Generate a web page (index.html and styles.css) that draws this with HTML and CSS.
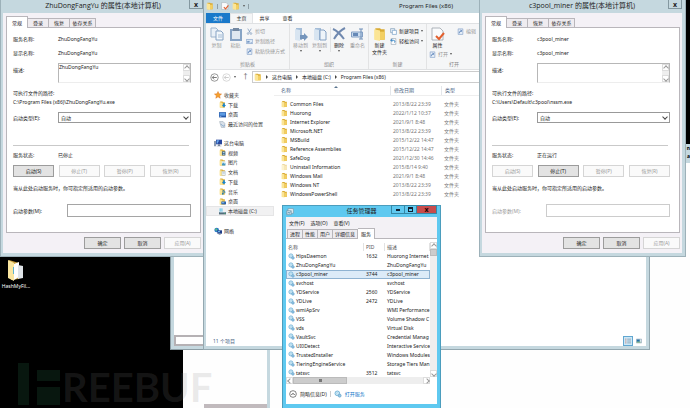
FILE: index.html
```html
<!DOCTYPE html>
<html lang="zh-CN">
<head>
<meta charset="utf-8">
<title>桌面</title>
<link rel="stylesheet" href="styles.css">
</head>
<body>
<svg class="defs" aria-hidden="true">
  <symbol id="folder" viewBox="0 0 12 12"><path fill="#d9ab34" d="M2 1l4 0 1 1h3v9H2z"/><path fill="#fbe596" d="M1 2l5 1v9l-5-1z"/><path fill="#f3cf62" d="M6 4h4v7H6z"/></symbol>
  <symbol id="star" viewBox="0 0 12 12"><path fill="#f5a12b" stroke="#dc6c1a" stroke-width=".7" d="M6 .8l1.5 3.5 3.8.3-2.9 2.5.9 3.7L6 8.8l-3.300 2 .9-3.700L.7 4.600l3.800-.3z"/></symbol>
  <symbol id="pc" viewBox="0 0 12 12"><path fill="#8b9bb2" d="M0 3h3v8H0z"/><path fill="#28479d" d="M3 1h9v7H3z"/><path fill="#6cabed" d="M4 2h4L5 7H4z"/><path fill="#7a879b" d="M6 8h3v2h2v1H4v-1h2z"/></symbol>
  <symbol id="desk" viewBox="0 0 12 12"><path fill="#2458a9" d="M0 2h12v9H0z"/><path fill="#5c9be2" d="M1 3h10v5H1z"/><path fill="#b9d5ef" d="M1 9h3v1H1z"/></symbol>
  <symbol id="recent" viewBox="0 0 12 12"><path fill="#d8e0e8" stroke="#8c9cab" stroke-width=".8" d="M1 1h6l3 3v7H4z"/><path fill="none" stroke="#568cc0" d="M3 5l4 4 3-2"/></symbol>
  <symbol id="down" viewBox="0 0 12 12"><use href="#folder"/><path fill="#1684cf" d="M7 4h3v3h2l-3.500 4L5 7h2z"/></symbol>
  <symbol id="video" viewBox="0 0 12 12"><use href="#folder"/><path fill="#45627d" d="M5 4h6v7H5z"/><path fill="#a8d4e8" d="M6.500 5h3v2h-3zM6.500 8h3v2h-3z"/></symbol>
  <symbol id="image" viewBox="0 0 12 12"><use href="#folder"/><path fill="#d8edf6" d="M5 4h6v7H5z"/><path fill="#4697c1" d="M5 9l2-3 2 2 2-1v4H5z"/></symbol>
  <symbol id="doc" viewBox="0 0 12 12"><use href="#folder"/><path fill="#f8fafc" stroke="#8da2b5" stroke-width=".6" d="M5 4h6v7H5z"/><path stroke="#7b9bb6" stroke-width=".7" d="M6 6h4M6 8h4"/></symbol>
  <symbol id="music" viewBox="0 0 12 12"><use href="#folder"/><path fill="none" stroke="#2078b5" stroke-width="1.500" d="M7 10V4l3 2v3"/><circle cx="6.500" cy="10" r="1.500" fill="#2078b5"/></symbol>
  <symbol id="fdesk" viewBox="0 0 12 12"><use href="#folder"/><path fill="#2b60a9" d="M4 6h8v5H4z"/><path fill="#78b2e8" d="M5 7h4v2H5z"/></symbol>
  <symbol id="disk" viewBox="0 0 12 12"><path fill="#36b4e5" d="M1 1h2v2H1zM4 1h2v2H4zM1 4h2v2H1zM4 4h2v2H4z"/><path fill="#526c7b" d="M0 7h12v4H0z"/><path fill="#a9c6d0" d="M1 7h10v1H1z"/><path fill="#43d266" d="M9 9h2v1H9z"/></symbol>
  <symbol id="net" viewBox="0 0 12 12"><circle cx="4" cy="4.500" r="3.500" fill="#2b77c9"/><path fill="#5dc57d" d="M2 2l3 1-1 3-2-1z"/><path fill="#203e88" d="M5 5h7v5H5z"/><path fill="#64b3ea" d="M6 6h3v2H6z"/><path fill="#71849a" d="M7 10h3v1.500H7z"/></symbol>
  <symbol id="copy" viewBox="0 0 14 14"><path fill="#e9f0f7" stroke="#9cb3cc" d="M1 1h5l2 2v7H1z"/><path fill="#f2f7fb" stroke="#86a3c4" d="M6 4h5l2 2v7H6z"/><path stroke="#a6bdd6" d="M8 8h4M8 10h4"/></symbol>
  <symbol id="paste" viewBox="0 0 14 14"><path fill="#87a4c5" d="M1 2h12v12H1z"/><path fill="#dfe8f1" d="M3 4h8v8H3z"/><path fill="#7388a1" d="M4 1h6v3H4z"/></symbol>
  <symbol id="cut" viewBox="0 0 12 12"><path fill="none" stroke="#7694b9" stroke-width="1.200" d="M3 1l4 7M9 1L5 8"/><circle cx="3.500" cy="9.500" r="1.500" fill="none" stroke="#7694b9"/><circle cx="8.500" cy="9.500" r="1.500" fill="none" stroke="#7694b9"/></symbol>
  <symbol id="path" viewBox="0 0 12 12"><path fill="#dfebf7" stroke="#7696c2" d="M.5 2.500h11v7H.5z"/><path fill="none" stroke="#557eb4" d="M2 5l1 3 1-3 1 3 1-3M8 8h2"/></symbol>
  <symbol id="link" viewBox="0 0 12 12"><path fill="#e7eff8" stroke="#7696c2" d="M2 1.500h8v9.500H2z"/><path fill="none" stroke="#406ead" stroke-width="1.300" d="M4 9c0-3 1-4 4-4M6 3l2 2-2 2"/></symbol>
  <symbol id="move" viewBox="0 0 14 14"><path fill="#a4bdd8" d="M2 1h6v12H2z"/><path fill="#d8e5f1" d="M1 2l5 1v11l-5-1z"/><path fill="#7595bc" d="M6 8h4V6l4 4-4 4v-2H6z"/></symbol>
  <symbol id="copyto" viewBox="0 0 14 14"><path fill="#a4bdd8" d="M2 1h6v12H2z"/><path fill="#d8e5f1" d="M1 2l5 1v11l-5-1z"/><path fill="#eef4fa" stroke="#83a0c4" d="M7 3h4l2 2v8H7z"/></symbol>
  <symbol id="delete" viewBox="0 0 14 14"><path fill="none" stroke="#7089af" stroke-width="2" d="M1 2c5 2 8 6 11 10M13 1C9 3 5 7 2 12"/></symbol>
  <symbol id="rename" viewBox="0 0 14 14"><path fill="#cbdcee" stroke="#829fc4" d="M.5 5h11v5H.5z"/><path fill="#6689b7" d="M2 6h5v3H2z"/><path fill="none" stroke="#6d8eb9" d="M8 2h4M10 2v10M8 12h4"/></symbol>
  <symbol id="check" viewBox="0 0 14 14"><path fill="#fafbfc" stroke="#9aa2aa" stroke-width=".8" d="M1 1h8l3 3v9H1z"/><path fill="none" stroke="#e2602f" stroke-width="2" d="M5 9l3 3 5-6"/></symbol>
  <symbol id="newitem" viewBox="0 0 12 12"><path fill="#e8f1f8" stroke="#7392b2" d="M1 1h7v7H1z"/><path fill="#fff" stroke="#5b8dbd" d="M4 4h7v7H4z"/></symbol>
  <symbol id="easy" viewBox="0 0 12 12"><path fill="#fff" stroke="#8998a8" d="M2 1h8v10H2z"/><path fill="none" stroke="#267bc1" stroke-width="1.500" d="M2 4h4c3 0 3 3 1 4M4 2L1 4l3 2"/></symbol>
  <symbol id="gear" viewBox="0 0 12 12"><circle cx="5" cy="5" r="3.500" fill="#d2edf8" stroke="#6fb0d6" stroke-width="1.400"/><circle cx="5" cy="5" r="1.200" fill="#fff" stroke="#6fb0d6" stroke-width=".6"/><circle cx="8.500" cy="8.500" r="2.200" fill="#9acce8" stroke="#5c9ac4"/></symbol>
  <symbol id="back" viewBox="0 0 12 12"><circle cx="6" cy="6" r="5" fill="#fff" stroke="currentColor"/><path fill="none" stroke="currentColor" stroke-width="1.300" d="M9 6H3M5.500 3.500L3 6l2.500 2.500"/></symbol>
</svg>

<main class="desktop">
  <div class="shortcut">
    <svg viewBox="0 0 18 22"><path fill="#c79e3c" d="M2 1l10 3v16L4 21z"/><path fill="#fbe7a1" d="M1 1l6 3v18l-6-3z"/><path fill="#fff" d="M7 5l5-2v15l-5 3z"/><path fill="#dfe4e8" d="M11 6l5 1v12l-5 1z"/><path fill="#61b4cd" d="M6 8h1v7H6z"/></svg>
    <span>HashMyFil...</span>
  </div>

  <div class="plain side"><div class="side-title"><b>n</b><b>a</b></div></div>
  <div class="plain lower"><div class="lower-scroll"></div></div>
  <div class="plain lower-right"></div>
  <div class="plain framed"><div class="framed-bar"></div></div>

  <section class="dialog first">
    <header><h2>ZhuDongFangYu 的属性(本地计算机)</h2><button class="close" aria-label="关闭">x</button></header>
    <div class="client">
      <nav class="tabs"><button class="on">常规</button><button>登录</button><button>恢复</button><button>依存关系</button></nav>
      <div class="panel">
        <div class="row"><span>服务名称:</span><span>ZhuDongFangYu</span></div>
        <div class="row"><span>显示名称:</span><span>ZhuDongFangYu</span></div>
        <div class="row desc"><label for="d1">描述:</label><div class="memo"><textarea id="d1" readonly>ZhuDongFangYu</textarea><div class="spin"><i class="up"></i><i class="dn"></i></div></div></div>
        <p class="path">可执行文件的路径:<br>C:\Program Files (x86)\ZhuDongFangYu.exe</p>
        <div class="row type"><label for="t1">启动类型(E):</label><div class="pick"><select id="t1"><option>自动</option></select></div></div>
        <hr>
        <div class="row state"><span>服务状态:</span><span>已停止</span></div>
        <div class="actions"><button>启动(S)</button><button disabled>停止(T)</button><button disabled>暂停(P)</button><button disabled>恢复(R)</button></div>
        <p class="hint">当从此处启动服务时，你可指定所适用的启动参数。</p>
        <div class="param"><label for="p1">启动参数(M):</label><input id="p1"></div>
      </div>
      <footer><button>确定</button><button>取消</button><button disabled>应用(A)</button></footer>
    </div>
  </section>

  <section class="explorer">
    <header class="titlebar">
      <div class="quick"><svg><use href="#folder"/></svg><i></i><svg><use href="#check"/></svg><svg><use href="#folder"/></svg><b class="caret"></b><i></i></div>
      <h2>Program Files (x86)</h2>
    </header>
    <nav class="ribbon-tabs"><button class="file">文件</button><button class="on">主页</button><button>共享</button><button>查看</button></nav>
    <div class="ribbon">
      <div class="group clip">
        <div class="tools">
          <button class="big dim"><svg><use href="#copy"/></svg>复制</button>
          <button class="big dim"><svg><use href="#paste"/></svg>粘贴</button>
          <div class="stack dim"><button><svg><use href="#cut"/></svg>剪切</button><button><svg><use href="#path"/></svg>复制路径</button><button><svg><use href="#link"/></svg>粘贴快捷方式</button></div>
        </div><span class="name">剪贴板</span>
      </div>
      <div class="group org">
        <div class="tools">
          <button class="big dim"><svg><use href="#move"/></svg>移动到<b class="caret"></b></button>
          <button class="big dim"><svg><use href="#copyto"/></svg>复制到<b class="caret"></b></button>
          <button class="big split"><svg><use href="#delete"/></svg>删除<b class="caret"></b></button>
          <button class="big dim"><svg><use href="#rename"/></svg>重命名</button>
        </div><span class="name">组织</span>
      </div>
      <div class="group new">
        <div class="tools">
          <button class="big"><svg><use href="#folder"/></svg><span>新建<br>文件夹</span></button>
          <div class="stack"><button><svg><use href="#newitem"/></svg>新建项目<b class="caret"></b></button><button><svg><use href="#easy"/></svg>轻松访问<b class="caret"></b></button></div>
        </div><span class="name">新建</span>
      </div>
      <div class="group open">
        <div class="tools">
          <div class="props"><button class="big"><svg><use href="#check"/></svg>属性</button><button class="mini dim"><svg><use href="#link"/></svg>打开<b class="caret"></b></button></div>
          <div class="stack dim"><button><svg><use href="#link"/></svg>编辑</button></div>
        </div><span class="name">打开</span>
      </div>
    </div>
    <div class="address">
      <button aria-label="后退"><svg><use href="#back"/></svg></button>
      <button class="fwd" aria-label="前进"><svg><use href="#back"/></svg></button>
      <b class="caret"></b><span class="upward">↑</span>
      <div class="crumbs"><svg><use href="#folder"/></svg><i></i><a href="#">这台电脑</a><i></i><a href="#">本地磁盘 (C:)</a><i></i><a href="#">Program Files (x86)</a></div>
    </div>
    <div class="body">
      <nav class="tree">
        <ul class="t1"><li class="root"><svg><use href="#star"/></svg>收藏夹</li><li><svg><use href="#down"/></svg>下载</li><li><svg><use href="#desk"/></svg>桌面</li><li><svg><use href="#recent"/></svg>最近访问的位置</li></ul>
        <ul class="t2"><li class="root"><svg><use href="#pc"/></svg>这台电脑</li><li><svg><use href="#video"/></svg>视频</li><li><svg><use href="#image"/></svg>图片</li><li><svg><use href="#doc"/></svg>文档</li><li><svg><use href="#down"/></svg>下载</li><li><svg><use href="#music"/></svg>音乐</li><li><svg><use href="#fdesk"/></svg>桌面</li><li class="sel"><svg><use href="#disk"/></svg>本地磁盘 (C:)</li></ul>
        <ul class="t3"><li class="root"><svg><use href="#net"/></svg>网络</li></ul>
      </nav>
      <table class="files">
        <thead><tr><th>名称<i></i></th><th>修改日期</th><th>类型</th></tr></thead>
        <tbody>
          <tr><td><svg><use href="#folder"/></svg>Common Files</td><td>2013/8/22 23:39</td><td>文件夹</td></tr>
          <tr><td><svg><use href="#folder"/></svg>Huorong</td><td>2022/1/12 10:37</td><td>文件夹</td></tr>
          <tr><td><svg><use href="#folder"/></svg>Internet Explorer</td><td>2021/9/1 8:48</td><td>文件夹</td></tr>
          <tr><td><svg><use href="#folder"/></svg>Microsoft.NET</td><td>2013/8/22 23:39</td><td>文件夹</td></tr>
          <tr><td><svg><use href="#folder"/></svg>MSBuild</td><td>2015/12/22 14:47</td><td>文件夹</td></tr>
          <tr><td><svg><use href="#folder"/></svg>Reference Assemblies</td><td>2015/12/22 14:47</td><td>文件夹</td></tr>
          <tr><td><svg><use href="#folder"/></svg>SafeDog</td><td>2021/12/30 14:46</td><td>文件夹</td></tr>
          <tr class="hidden-item"><td><svg><use href="#folder"/></svg>Uninstall Information</td><td>2015/8/14 9:40</td><td>文件夹</td></tr>
          <tr><td><svg><use href="#folder"/></svg>Windows Mail</td><td>2021/9/1 8:48</td><td>文件夹</td></tr>
          <tr><td><svg><use href="#folder"/></svg>Windows NT</td><td>2013/8/22 23:39</td><td>文件夹</td></tr>
          <tr><td><svg><use href="#folder"/></svg>WindowsPowerShell</td><td>2013/8/22 23:39</td><td>文件夹</td></tr>
        </tbody>
      </table>
    </div>
    <footer class="status"><span>11 个项目</span><button class="on" aria-label="详细信息"><svg viewBox="0 0 8 8"><path stroke="#8296a8" d="M3 1.500h5M3 4h5M3 6.500h5"/><path stroke="#c77d70" d="M0 1.500h2M0 4h2M0 6.500h2"/></svg></button><button aria-label="大图标"><svg viewBox="0 0 8 8"><path fill="#d8e6ee" stroke="#8ba0b0" stroke-width=".8" d="M.5 1.500h7v5h-7z"/><path fill="#256fa5" d="M1 2h4v3H1z"/><path fill="#5ca45c" d="M1 5h5v1H1z"/></svg></button></footer>
  </section>

  <section class="dialog second">
    <header><h2>c3pool_miner 的属性(本地计算机)</h2><button class="close" aria-label="关闭">x</button></header>
    <div class="client">
      <nav class="tabs"><button class="on">常规</button><button>登录</button><button>恢复</button><button>依存关系</button></nav>
      <div class="panel">
        <div class="row"><span>服务名称:</span><span>c3pool_miner</span></div>
        <div class="row"><span>显示名称:</span><span>c3pool_miner</span></div>
        <div class="row desc"><label for="d2">描述:</label><div class="memo"><textarea id="d2" readonly></textarea><div class="spin"><i class="up"></i><i class="dn"></i></div></div></div>
        <p class="path">可执行文件的路径:<br>C:\Users\Default\c3pool\nssm.exe</p>
        <div class="row type"><label for="t2">启动类型(E):</label><div class="pick"><select id="t2"><option>自动</option></select></div></div>
        <hr>
        <div class="row state"><span>服务状态:</span><span>正在运行</span></div>
        <div class="actions"><button disabled>启动(S)</button><button>停止(T)</button><button disabled>暂停(P)</button><button disabled>恢复(R)</button></div>
        <p class="hint">当从此处启动服务时，你可指定所适用的启动参数。</p>
        <div class="param off"><label for="p2">启动参数(M):</label><input id="p2" disabled></div>
      </div>
      <footer><button>确定</button><button>取消</button><button disabled>应用(A)</button></footer>
    </div>
  </section>

  <section class="taskmgr">
    <header>
      <svg class="appicon" viewBox="0 0 12 12"><path fill="#e8f4fa" stroke="#7694a5" d="M3 1h8v7H3z"/><path fill="#c8dde8" stroke="#7694a5" d="M1 4h7v6H1z"/><path fill="none" stroke="#4b8aa9" d="M2 8l2-2 1 2 2-3"/></svg>
      <h2>任务管理器</h2>
      <div class="controls"><button aria-label="最小化"><i class="min"></i></button><button aria-label="最大化"><i class="max"></i></button><button class="red" aria-label="关闭">x</button></div>
    </header>
    <div class="inner">
      <nav class="menu"><button>文件(F)</button><button>选项(O)</button><button>查看(V)</button></nav>
      <nav class="tm-tabs"><button>进程</button><button>性能</button><button>用户</button><button>详细信息</button><button class="on">服务</button></nav>
      <div class="tm-page">
        <div class="listbox">
          <table>
            <thead><tr><th>名称</th><th>PID</th><th>描述</th></tr></thead>
            <tbody>
              <tr><td><svg><use href="#gear"/></svg>HipsDaemon</td><td>1632</td><td>Huorong Internet</td></tr>
              <tr><td><svg><use href="#gear"/></svg>ZhuDongFangYu</td><td></td><td>ZhuDongFangYu</td></tr>
              <tr class="sel"><td><svg><use href="#gear"/></svg>c3pool_miner</td><td>3744</td><td>c3pool_miner</td></tr>
              <tr><td><svg><use href="#gear"/></svg>svchost</td><td></td><td>svchost</td></tr>
              <tr><td><svg><use href="#gear"/></svg>YDService</td><td>2560</td><td>YDService</td></tr>
              <tr><td><svg><use href="#gear"/></svg>YDLive</td><td>2472</td><td>YDLive</td></tr>
              <tr><td><svg><use href="#gear"/></svg>wmiApSrv</td><td></td><td>WMI Performance</td></tr>
              <tr><td><svg><use href="#gear"/></svg>VSS</td><td></td><td>Volume Shadow C</td></tr>
              <tr><td><svg><use href="#gear"/></svg>vds</td><td></td><td>Virtual Disk</td></tr>
              <tr><td><svg><use href="#gear"/></svg>VaultSvc</td><td></td><td>Credential Manag</td></tr>
              <tr><td><svg><use href="#gear"/></svg>UI0Detect</td><td></td><td>Interactive Service</td></tr>
              <tr><td><svg><use href="#gear"/></svg>TrustedInstaller</td><td></td><td>Windows Modules</td></tr>
              <tr><td><svg><use href="#gear"/></svg>TieringEngineService</td><td></td><td>Storage Tiers Man</td></tr>
              <tr><td><svg><use href="#gear"/></svg>tatsvc</td><td>3512</td><td>tatsvc</td></tr>
            </tbody>
          </table>
          <div class="vbar"><i class="up"></i><b></b><i class="dn"></i></div>
        </div>
        <div class="hbar"><i class="lf"></i><b></b><i class="rt"></i></div>
        <footer><svg viewBox="0 0 12 12"><circle cx="6" cy="6" r="5" fill="#fff" stroke="#444"/><path fill="none" stroke="#333" stroke-width="1.300" d="M3.500 7.500L6 5l2.500 2.500"/></svg><button>简略信息(D)</button><i></i><svg><use href="#gear"/></svg><a href="#">打开服务</a></footer>
      </div>
    </div>
  </section>

  <div class="brand"><svg viewBox="0 0 42 42"><path d="M0 0h11v42H0zM19 7h23v11H19zM19 24h23v18H19z"/></svg><span>REEBUF</span></div>
</main>
</body>
</html>
```
FILE: styles.css
```css
* { box-sizing: border-box; }
body, h2, p, ul { margin: 0; padding: 0; }
body {
  background: #fff;
  color: #222;
  font: 5px/8px "Noto Sans", "Noto Sans CJK SC", sans-serif;
  overflow: hidden;
}
button, input, select, textarea { font: inherit; color: inherit; margin: 0; padding: 0; border: 0; background: none; border-radius: 0; white-space: nowrap; }
a { color: inherit; text-decoration: none; }
svg { display: block; flex: none; width: 8px; height: 8px; }
.defs { position: absolute; width: 0; height: 0; }
h2 { font: 400 7px/12px "Open Sans", "Noto Sans CJK SC", sans-serif; white-space: nowrap; }
ul { list-style: none; }

.desktop { position: relative; height: calc(100vh - 4px); background: #000; overflow: hidden; }
.shortcut { position: absolute; left: 0; top: 259px; width: 32px; color: #fff; display: flex; flex-direction: column; align-items: center; gap: 1px; }
.shortcut svg { width: 18px; height: 22px; }

/* windows lying behind */
.plain { position: absolute; background: #fefefe; }
.side { left: 640px; right: 0; top: 144px; bottom: 0; }
.side-title { display: flex; flex-direction: column; align-items: flex-end; height: 19px; background: #c5d8df; color: #000; }
.lower { left: 183px; width: 87px; top: 349px; bottom: 0; border-right: 3px solid #c5d8df; display: flex; align-items: flex-end; }
.lower-scroll { margin-left: 21px; flex: 1; height: 4px; background: #c1babd; }
.lower-right { left: 270px; right: 0; top: 349px; bottom: 0; }
.framed { left: 170px; top: 250px; width: 444px; height: 100px; border: solid #c5d8df; border-width: 0 4px 4px; outline: 1px solid #8c9da4; outline-offset: -1px; }
.framed-bar { margin-top: 85px; height: 11px; border: 2px solid #b5b1b4; }

/* property dialogs */
.dialog { position: absolute; top: 0; width: 207px; background: #c5d8df; border: 1px solid #9db1b9; border-width: 0 1px 1px; padding: 0 3px 3px 2px; }
.first { left: 0; }
.second { left: 479px; }
.dialog header { display: flex; height: 13px; }
.dialog h2 { flex: 1; text-align: center; }
.close { width: 14px; height: 9px; border: 1px solid #8498a0; border-top: 0; font-weight: 700; font-size: 7px; line-height: 7px; margin-left: -14px; }
.client { background: #f4f1f6; padding: 3px 2px 4px 3px; }
.tabs { display: flex; align-items: flex-end; height: 11px; }
.tabs button { height: 9px; width: 21px; border: 1px solid #b9b6bb; border-left: 0; border-bottom: 0; background: #efecf0; }
.tabs button:last-child { width: 26px; }
.tabs .on { height: 12px; width: 22px; margin-bottom: -1px; border-left: 1px solid #b9b6bb; background: #fff; position: relative; }
.panel { background: #fff; border: 1px solid #b9b6bb; padding: 4px 9px 15px 6px; }
.row { display: grid; grid-template-columns: 45px 1fr; align-items: center; height: 14px; }
.desc { height: 20px; margin: 3px 0 6px; align-items: start; }
.desc label { padding-top: 3px; }
.memo { height: 20px; display: flex; border: 1px solid #b7b7b7; border-bottom-color: #ededed; }
.memo textarea { flex: 1; min-width: 0; resize: none; outline: 0; overflow: hidden; line-height: 7px; }
.spin { width: 7px; display: flex; flex-direction: column; justify-content: space-between; background: #eee; }
.spin i, .vbar i, .hbar i { flex: none; width: 7px; height: 7px; background: #fff; border: 1px solid #ddd; display: grid; place-items: center; }
.up::before, .dn::before, .lf::before, .rt::before, .pick::after { content: ""; width: 3px; height: 3px; border: solid #999; border-width: 1px 0 0 1px; transform: rotate(45deg); }
.dn::before { transform: rotate(225deg); }
.lf::before { transform: rotate(-45deg); }
.rt::before { transform: rotate(135deg); }
.path { line-height: 9px; white-space: nowrap; }
.type { height: 11px; margin-top: 5px; }
.pick { display: flex; align-items: center; height: 11px; border: 1px solid #999; }
.pick select { appearance: none; flex: 1; padding-left: 2px; }
.pick::after { border-color: #444; transform: rotate(225deg); margin: 0 2px 2px 0; }
hr { margin: 22px 2px 4px 0; border: 0; height: 1px; background: #c9c9c9; }
.state { height: 10px; }
.actions { display: flex; justify-content: space-between; margin-top: 5px; }
.actions button, .dialog footer button { width: 41px; height: 12px; background: #e3e3e3; border: 1px solid #9c9c9c; line-height: 10px; }
.actions button:disabled, .dialog footer button:disabled { background: #fafafa; border-color: #d5d5d5; color: #9a9a9a; }
.hint { margin: 7px 0 12px; white-space: nowrap; }
.param { display: grid; grid-template-columns: 54px 1fr; align-items: center; }
.param input { height: 13px; width: 100%; border: 1px solid #a5a5a5; background: #fff; }
.off { color: #999; }
.off input { border-color: #ccc; }
.dialog footer { display: flex; justify-content: flex-end; gap: 3px; padding-top: 4px; }
.dialog footer button { width: 37px; }

/* file explorer */
.explorer { position: absolute; left: 203px; top: 0; width: 447px; height: 350px; display: flex; flex-direction: column; background: #c5d8df; border: solid #94a8b0; border-width: 0 1px 1px; padding: 0 3px 3px 2px; }
.titlebar { position: relative; height: 13px; flex: none; }
.titlebar h2 { text-align: center; font-family: "Noto Sans", sans-serif; font-size: 6px; }
.quick { position: absolute; left: 0; top: 2px; display: flex; align-items: center; gap: 3px; height: 8px; }
.quick i { width: 1px; height: 5px; background: #8e9fa6; }
.caret { display: inline-block; flex: none; border: solid transparent; border-width: 2px 1px 0; border-top-color: #555; }
.ribbon-tabs { display: flex; background: #fff; height: 10px; flex: none; }
.ribbon-tabs button { width: 23px; line-height: 10px; }
.ribbon-tabs .file { width: 24px; background: #1979ca; color: #fff; }
.ribbon-tabs .on { background: #f5f6f7; border: 1px solid #e2e4e6; border-width: 1px 1px 0; line-height: 9px; }
.ribbon { display: flex; height: 47px; flex: none; background: #f5f6f7; border: 1px solid #dfe1e3; border-width: 1px 0; }
.group { display: flex; flex-direction: column; justify-content: space-between; border-right: 1px solid #e2e3e4; padding: 3px 2px 1px; }
.clip { width: 84px; }
.org { width: 79px; }
.new { width: 58px; }
.open { flex: 1; border: 0; }
.open .name { margin-left: 20px; text-align: left; }
.name { text-align: center; color: #8a8a8a; }
.tools { display: flex; gap: 2px; }
.big { width: 17px; line-height: 7px; display: flex; flex-direction: column; align-items: center; gap: 1px; }
.big svg { width: 14px; height: 14px; }
.split { border-left: 1px solid #e2e3e4; }
.dim { color: #999; }
.stack { display: flex; flex-direction: column; gap: 2px; }
.stack button, .mini { display: flex; align-items: center; gap: 2px; height: 8px; }
.stack svg, .mini svg { width: 7px; height: 7px; }
.props { display: flex; flex-direction: column; width: 26px; gap: 1px; }
.address { display: flex; align-items: center; height: 14px; flex: none; background: #fff; padding-left: 4px; gap: 3px; }
.address svg { width: 9px; height: 9px; color: #777; }
.address .fwd svg { color: #ccc; }
.upward { margin-left: 3px; font-size: 7px; color: #555; }
.crumbs { flex: 1; height: 12px; display: flex; align-items: center; gap: 3px; padding-left: 1px; border: 1px solid #ccc; white-space: nowrap; }
.crumbs svg { width: 8px; height: 8px; }
.crumbs i { border: solid transparent; border-width: 2px 0 2px 2px; border-left-color: #444; margin: 0 1px; }
.body { flex: 1; display: flex; background: #fff; min-height: 0; }
.tree { width: 68px; padding-top: 6px; color: #333; }
.tree ul { display: grid; grid-auto-rows: 1fr; }
.tree .t1 { height: 39px; }
.tree .t2 { height: 78px; margin: 9px 0 10px; }
.tree .t3 { height: 10px; }
.tree li { display: flex; align-items: center; gap: 2px; padding-left: 13px; white-space: nowrap; }
.tree svg { width: 7px; height: 7px; }
.tree .root { padding-left: 8px; }
.tree .root svg { width: 8px; height: 8px; }
.tree .sel { background: #f1f1f2; outline: 1px solid #e5e5e6; outline-offset: -1px; }
.files, .files thead, .files tbody { display: block; }
.files { flex: 1; }
.files tr { display: grid; grid-template-columns: 116px 51px 1fr; align-items: center; }
.files thead { padding: 2px 0 4px; }
.files thead tr { height: 10px; border-bottom: 1px solid #eee; }
.files th { font-weight: 400; text-align: left; color: #49617f; padding: 0 0 0 3px; border-left: 1px solid #e3e6ea; position: relative; line-height: 9px; }
.files th:first-child { padding-left: 7px; border: 0; }
.files th i { position: absolute; left: 60px; top: 0; border: solid transparent; border-width: 0 2px 2px; border-bottom-color: #5c7690; }
.files tbody { display: grid; grid-auto-rows: 1fr; height: 98px; }
.files td { padding: 0 0 0 3px; color: #777; }
.files td:first-child { display: flex; align-items: center; gap: 2px; padding-left: 7px; color: #222; }
.files td svg { width: 7px; height: 8px; }
.files .hidden-item svg { opacity: .45; }
.status { display: flex; align-items: center; height: 11px; flex: none; background: #fff; color: #49617f; padding: 0 3px 0 7px; gap: 2px; }
.status span { flex: 1; }
.status button { width: 8px; height: 10px; display: grid; place-items: center; }
.status .on { width: 10px; background: #cbe8f8; border: 1px solid #62a7d0; }
.status svg { width: 6px; height: 6px; }

/* task manager */
.taskmgr { position: absolute; left: 282px; top: 205px; width: 159px; background: #5fc9f0; border: 1px solid #4b9dbd; padding: 0 3px 4px; }
.taskmgr header { position: relative; height: 11px; }
.taskmgr h2 { text-align: center; line-height: 11px; font-size: 6px; }
.appicon { position: absolute; left: 0; top: 2px; }
.controls { position: absolute; right: 0; top: -1px; display: flex; height: 9px; }
.controls button { width: 12px; border: 1px solid #3587a5; border-left: 0; display: grid; place-items: center; font-weight: 700; font-size: 7px; line-height: 7px; }
.controls button:first-child { width: 14px; border-left: 1px solid #3587a5; }
.controls .red { width: 20px; background: #c84c4c; color: #200; }
.min { width: 4px; height: 2px; background: #123; }
.max { width: 5px; height: 5px; border: 1px solid #123; border-top-width: 2px; }
.inner { background: #f3f1f5; }
.menu { display: flex; height: 11px; gap: 6px; padding-left: 3px; }
.tm-tabs { display: flex; align-items: flex-end; padding-left: 1px; }
.tm-tabs button { border: 1px solid #b8b6ba; border-left: 0; border-bottom: 0; padding: 0 2px; height: 9px; background: #eeecf0; }
.tm-tabs button:first-child { border-left: 1px solid #b8b6ba; }
.tm-tabs .on { background: #fff; height: 11px; padding: 0 3px; margin-bottom: -1px; position: relative; }
.tm-page { background: #fff; border-top: 1px solid #b8b6ba; padding-top: 3px; }
.listbox { display: flex; height: 135px; overflow: hidden; }
.listbox table, .listbox thead, .listbox tbody { display: block; }
.listbox table { flex: 1; min-width: 0; overflow: hidden; }
.listbox tr { display: grid; grid-template-columns: 78px 21px 1fr; align-items: center; white-space: nowrap; }
.listbox thead tr { height: 10px; }
.listbox th { font-weight: 400; text-align: left; padding: 0 0 0 2px; color: #555; border-right: 1px solid #e2e2e2; }
.listbox tbody { display: grid; grid-auto-rows: 1fr; height: 125px; }
.listbox td { padding: 0 0 0 2px; }
.listbox td:first-child { display: flex; align-items: center; gap: 1px; }
.listbox td svg { width: 7px; height: 7px; }
.listbox .sel { background: #dcebf8; outline: 1px solid #8fb3d2; outline-offset: -1px; }
.vbar { width: 7px; background: #eee; display: flex; flex-direction: column; }
.vbar b { height: 7px; background: #ccc; border: 1px solid #bbb; }
.vbar .dn { margin-top: auto; }
.hbar { display: flex; height: 7px; background: #eee; margin-right: 7px; }
.hbar b { width: 54px; background: #ccc; border: 1px solid #bbb; }
.hbar b::after { content: ""; display: block; width: 3px; height: 3px; margin: 1px auto; background: #777; }
.hbar .rt { margin-left: auto; }
.tm-page footer { display: flex; align-items: center; gap: 3px; height: 20px; padding-left: 3px; }
.tm-page footer i { width: 1px; height: 6px; background: #ccc; }
.tm-page footer a { color: #1979ca; }

.brand { position: absolute; left: 18px; top: 363px; display: flex; gap: 2px; color: #80808029; font: 700 40px/48px Lato, sans-serif; pointer-events: none; }
.brand svg { width: 42px; height: 42px; fill: #308c6029; }
```
